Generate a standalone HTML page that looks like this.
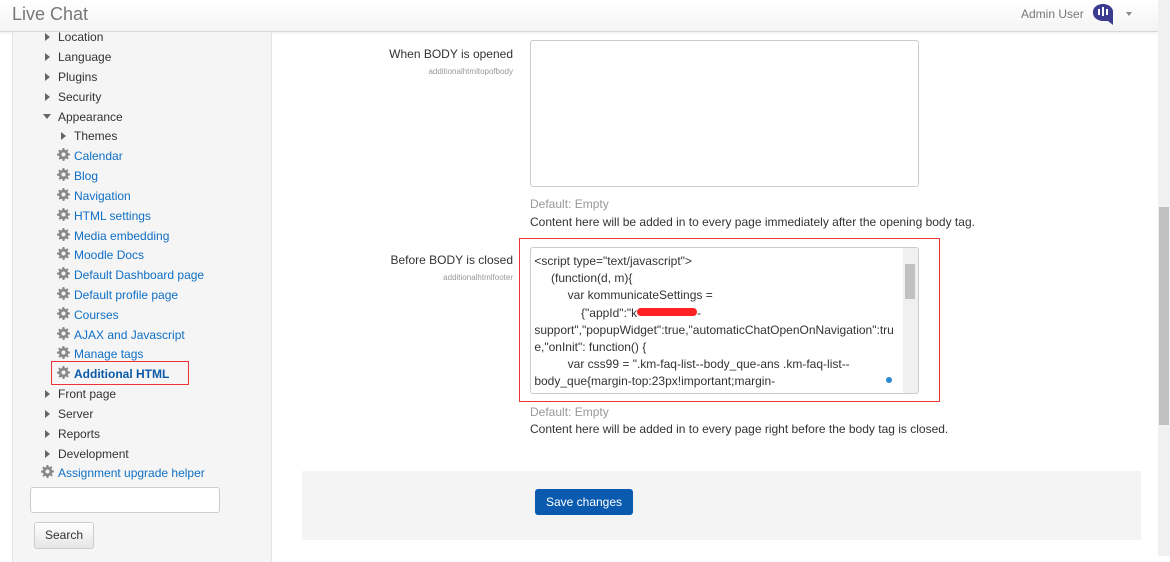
<!DOCTYPE html>
<html><head><style>
*{box-sizing:border-box;margin:0;padding:0}
body{width:1170px;height:556px;overflow:hidden;background:#fff;font-family:"Liberation Sans",sans-serif;font-size:12px;color:#333;position:relative}
.hdr{position:absolute;left:0;top:0;width:1158px;height:32px;background:linear-gradient(#fff,#f4f4f4);border-bottom:1px solid #d8d8d8;box-shadow:0 1px 3px rgba(0,0,0,.08)}
.hdr .t{position:absolute;left:12px;top:4px;font-size:18px;color:#777}
.hdr .u{position:absolute;left:1021px;top:7px;font-size:12px;color:#777}
.sb{position:absolute;right:0;top:0;width:12px;height:556px;background:#f0f0f0}
.sb .th{position:absolute;left:1px;top:207px;width:10px;height:218px;background:#c1c1c1}
.side{position:absolute;left:12px;top:32px;width:260px;height:530px;background:#f5f5f5;border-left:1px solid #e3e3e3;border-right:1px solid #e3e3e3}
.it{position:absolute;white-space:nowrap;font-size:12px}
.tri{display:inline-block;width:0;height:0;border-top:4px solid transparent;border-bottom:4px solid transparent;border-left:5px solid #666;margin-right:8px;vertical-align:0}
.tri.d{border-left:4px solid transparent;border-right:4px solid transparent;border-top:5px solid #666;border-bottom:0;margin-right:7px;vertical-align:2px}
.g{display:inline-block;width:13px;height:13px;margin-right:4px;vertical-align:-1px}
a{color:#0f6fc5;text-decoration:none}
.lbl{position:absolute;right:657px;text-align:right;font-size:12px;color:#333}
.sm{position:absolute;right:657px;font-size:8px;color:#999}
.ta{position:absolute;border:1px solid #ccc;border-radius:3px;background:#fff}
.note{position:absolute;left:530px;font-size:12px;color:#333}
.note.g2{color:#999}
</style></head><body>
<svg width="0" height="0" style="position:absolute"><defs><symbol id="gear" viewBox="0 0 16 16"><path fill="#888" d="M7 0h2l.4 2.2 1.5.6 1.8-1.3 1.4 1.4-1.3 1.8.6 1.5L16 7v2l-2.2.4-.6 1.5 1.3 1.8-1.4 1.4-1.8-1.3-1.5.6L9 16H7l-.4-2.2-1.5-.6-1.8 1.3-1.4-1.4 1.3-1.8-.6-1.5L0 9V7l2.2-.4.6-1.5-1.3-1.8 1.4-1.4 1.8 1.3 1.5-.6zM8 5.5A2.5 2.5 0 1 0 8 10.5 2.5 2.5 0 1 0 8 5.5z"/></symbol></defs></svg>
<div class="hdr"><div class="t">Live Chat</div><div class="u">Admin User</div>
<svg style="position:absolute;left:1090px;top:2px" width="28" height="26" viewBox="0 0 28 26"><path d="M3 11a10 8 0 0 1 20-2v14l-5-4h-5A10 8 0 0 1 3 11z" fill="#3b3b8f"/><rect x="8" y="7" width="2" height="6" fill="#fff"/><rect x="12" y="5" width="2" height="9" fill="#fff"/><rect x="16" y="7" width="2" height="6" fill="#fff"/></svg>
<div style="position:absolute;left:1126px;top:12px;border-left:3px solid transparent;border-right:3px solid transparent;border-top:4px solid #888"></div>
</div>
<div class="side">
<div class="it" style="left:32px;top:-2px"><span class="tri"></span>Location</div>
<div class="it" style="left:32px;top:18px"><span class="tri"></span>Language</div>
<div class="it" style="left:32px;top:38px"><span class="tri"></span>Plugins</div>
<div class="it" style="left:32px;top:58px"><span class="tri"></span>Security</div>
<div class="it" style="left:30px;top:78px"><span class="tri d"></span>Appearance</div>
<div class="it" style="left:48px;top:97px"><span class="tri"></span>Themes</div>
<div class="it" style="left:44px;top:116px"><svg class="g"><use href="#gear"/></svg><a>Calendar</a></div>
<div class="it" style="left:44px;top:136px"><svg class="g"><use href="#gear"/></svg><a>Blog</a></div>
<div class="it" style="left:44px;top:156px"><svg class="g"><use href="#gear"/></svg><a>Navigation</a></div>
<div class="it" style="left:44px;top:176px"><svg class="g"><use href="#gear"/></svg><a>HTML settings</a></div>
<div class="it" style="left:44px;top:196px"><svg class="g"><use href="#gear"/></svg><a>Media embedding</a></div>
<div class="it" style="left:44px;top:215px"><svg class="g"><use href="#gear"/></svg><a>Moodle Docs</a></div>
<div class="it" style="left:44px;top:235px"><svg class="g"><use href="#gear"/></svg><a>Default Dashboard page</a></div>
<div class="it" style="left:44px;top:255px"><svg class="g"><use href="#gear"/></svg><a>Default profile page</a></div>
<div class="it" style="left:44px;top:275px"><svg class="g"><use href="#gear"/></svg><a>Courses</a></div>
<div class="it" style="left:44px;top:295px"><svg class="g"><use href="#gear"/></svg><a>AJAX and Javascript</a></div>
<div class="it" style="left:44px;top:314px"><svg class="g"><use href="#gear"/></svg><a>Manage tags</a></div>
<div style="position:absolute;left:38px;top:329px;width:138px;height:24px;border:1px solid #e33"></div>
<div class="it" style="left:44px;top:334px"><svg class="g"><use href="#gear"/></svg><a style="font-weight:bold;color:#0a5aa8">Additional HTML</a></div>
<div class="it" style="left:32px;top:355px"><span class="tri"></span>Front page</div>
<div class="it" style="left:32px;top:375px"><span class="tri"></span>Server</div>
<div class="it" style="left:32px;top:395px"><span class="tri"></span>Reports</div>
<div class="it" style="left:32px;top:415px"><span class="tri"></span>Development</div>
<div class="it" style="left:28px;top:433px"><svg class="g"><use href="#gear"/></svg><a>Assignment upgrade helper</a></div>
<div style="position:absolute;left:17px;top:455px;width:190px;height:26px;background:#fff;border:1px solid #ccc;border-radius:3px"></div>
<div style="position:absolute;left:21px;top:490px;width:60px;height:27px;background:linear-gradient(#fff,#e6e6e6);border:1px solid #ccc;border-radius:3px;text-align:center;line-height:25px;color:#333">Search</div>
</div>

<div class="lbl" style="top:47px">When BODY is opened</div>
<div class="sm" style="top:67px">additionalhtmltopofbody</div>
<div class="ta" style="left:530px;top:40px;width:389px;height:147px"></div>
<div class="note g2" style="top:197px">Default: Empty</div>
<div class="note" style="top:215px">Content here will be added in to every page immediately after the opening body tag.</div>

<div class="lbl" style="top:253px">Before BODY is closed</div>
<div class="sm" style="top:273px">additionalhtmlfooter</div>
<div style="position:absolute;left:519px;top:238px;width:421px;height:164px;border:1px solid #e33"></div>
<div class="ta" style="left:530px;top:247px;width:389px;height:147px;overflow:hidden">
<div style="position:absolute;left:0;top:5px;font-size:12px;line-height:17.2px;color:#333;white-space:pre">&nbsp;&lt;script type="text/javascript"&gt;
      (function(d, m){
           var kommunicateSettings =
               {"appId":"k<span style="display:inline-block;width:60px;height:8px;background:#f22;border-radius:4px;vertical-align:1px"></span>-
 support","popupWidget":true,"automaticChatOpenOnNavigation":tru
 e,"onInit": function() {
           var css99 = ".km-faq-list--body_que-ans .km-faq-list--
 body_que{margin-top:23px!important;margin-</div>
<div style="position:absolute;right:0;top:0;width:15px;height:146px;background:#f0f0f0"></div>
<div style="position:absolute;right:3px;top:16px;width:10px;height:35px;background:#c1c1c1"></div>
<div style="position:absolute;left:355px;top:129px;width:6px;height:6px;border-radius:50%;background:#2a8ad4"></div>
</div>
<div class="note g2" style="top:405px">Default: Empty</div>
<div class="note" style="top:422px">Content here will be added in to every page right before the body tag is closed.</div>

<div style="position:absolute;left:302px;top:471px;width:839px;height:69px;background:#f4f4f4"></div>
<div style="position:absolute;left:535px;top:489px;width:98px;height:26px;background:#0a5bb0;border-radius:3px;color:#fff;font-size:12px;text-align:center;line-height:26px">Save changes</div>

<div class="sb"><div class="th"></div></div>
</body></html>
